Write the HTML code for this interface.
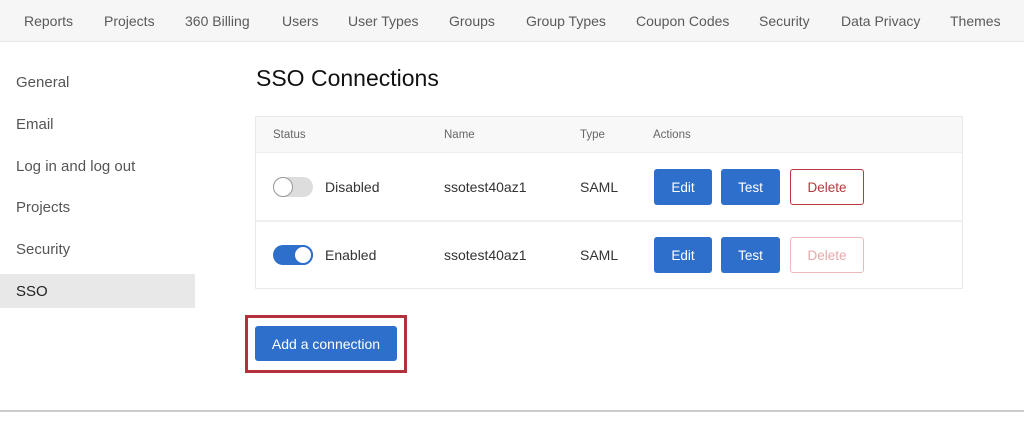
<!DOCTYPE html>
<html><head><style>
*{margin:0;padding:0;box-sizing:border-box}
body{width:1024px;height:442px;background:#fff;font-family:"Liberation Sans",sans-serif;position:relative;overflow:hidden;color:#333}
.a{position:absolute;white-space:nowrap}
.nav{position:absolute;left:0;top:0;width:1024px;height:42px;background:#f6f6f6;border-bottom:1px solid #e6e6e6}
.nav span{position:absolute;top:13px;font-size:14px;color:#5a5a5a}
.side{font-size:15px;color:#555;left:16px}
.btn{position:absolute;height:36px;border-radius:3px;font-size:13.5px;display:flex;align-items:center;justify-content:center}
.blue{background:#2f6fcc;color:#fff}
.tgl{position:absolute;width:40px;height:20px;border-radius:10px}
.knob{position:absolute;top:0;width:20px;height:20px;border-radius:50%;background:#fff}
.cell{font-size:14px;color:#333;position:absolute}
.hd{font-size:11.5px;color:#666;position:absolute;top:129px}
</style></head><body>
<div class="nav">
<span style="left:24px">Reports</span><span style="left:104px">Projects</span><span style="left:185px">360 Billing</span><span style="left:282px">Users</span><span style="left:348px">User Types</span><span style="left:449px">Groups</span><span style="left:526px">Group Types</span><span style="left:636px">Coupon Codes</span><span style="left:759px">Security</span><span style="left:841px">Data Privacy</span><span style="left:950px">Themes</span>
</div>
<div class="a side" style="top:74px">General</div>
<div class="a side" style="top:116px">Email</div>
<div class="a side" style="top:158px">Log in and log out</div>
<div class="a side" style="top:199px">Projects</div>
<div class="a side" style="top:241px">Security</div>
<div class="a" style="left:0;top:274px;width:195px;height:34px;background:#e8e8e8"></div>
<div class="a side" style="top:283px;color:#222">SSO</div>
<div class="a" style="left:256px;top:65px;font-size:23px;color:#111">SSO Connections</div>
<div class="a" style="left:255px;top:116px;width:708px;height:173px;border:1px solid #eaeaea"></div>
<div class="a" style="left:256px;top:117px;width:706px;height:36px;background:#f8f8f8;border-bottom:1px solid #eee"></div>
<div class="a" style="left:256px;top:220px;width:706px;height:2px;background:#f0f0f0"></div>
<div class="hd" style="left:273px">Status</div><div class="hd" style="left:444px">Name</div><div class="hd" style="left:580px">Type</div><div class="hd" style="left:653px">Actions</div>
<div class="tgl" style="left:273px;top:177px;background:#ddd"><div class="knob" style="left:0;border:1px solid #999"></div></div>
<div class="tgl" style="left:273px;top:245px;background:#2f6fcc"><div class="knob" style="left:20px;border:2px solid #2f6fcc"></div></div>
<div class="cell" style="left:325px;top:179px">Disabled</div><div class="cell" style="left:444px;top:179px">ssotest40az1</div><div class="cell" style="left:580px;top:179px">SAML</div>
<div class="cell" style="left:325px;top:247px">Enabled</div><div class="cell" style="left:444px;top:247px">ssotest40az1</div><div class="cell" style="left:580px;top:247px">SAML</div>
<div class="btn blue" style="left:654px;top:169px;width:58px">Edit</div>
<div class="btn blue" style="left:721px;top:169px;width:59px">Test</div>
<div class="btn" style="left:790px;top:169px;width:74px;border:1.5px solid #b8383d;color:#b8383d">Delete</div>
<div class="btn blue" style="left:654px;top:237px;width:58px">Edit</div>
<div class="btn blue" style="left:721px;top:237px;width:59px">Test</div>
<div class="btn" style="left:790px;top:237px;width:74px;border:1px solid #ecb8ba;color:#e6a9ab">Delete</div>
<div class="a" style="left:245px;top:315px;width:162px;height:58px;border:3px solid #b5303a"></div>
<div class="btn blue" style="left:255px;top:326px;width:142px;height:35px;font-size:14px">Add a connection</div>
<div class="a" style="left:0;top:410px;width:1024px;height:2px;background:#ccc"></div>
</body></html>
